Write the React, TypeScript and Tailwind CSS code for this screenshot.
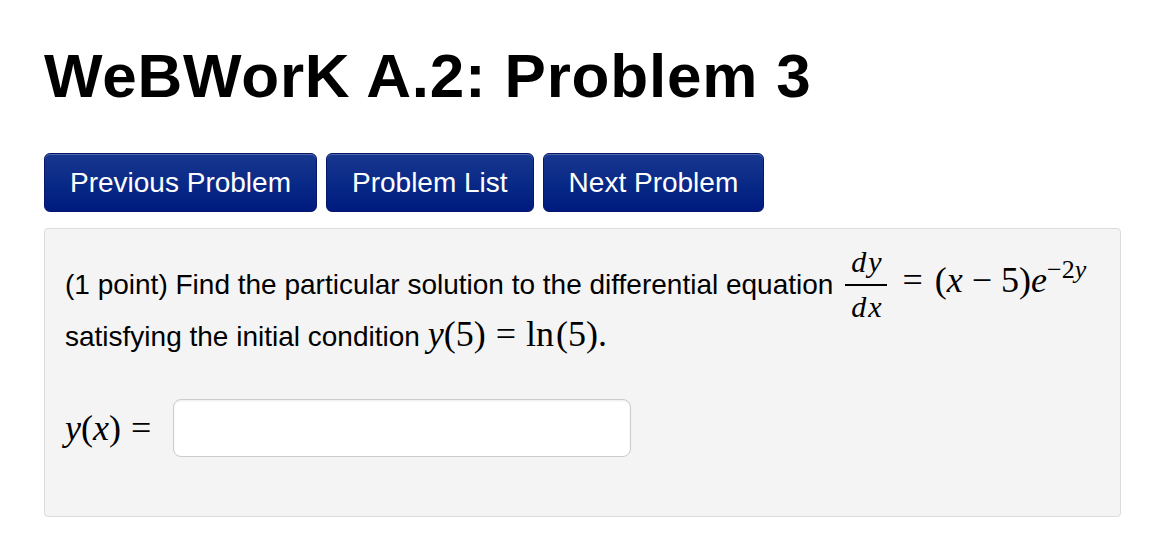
import React from "react";

const sans = { fontFamily: '"Liberation Sans", Arial, Helvetica, sans-serif' };

function Btn({ children }: { children: React.ReactNode }) {
  return (
    <button className="h-[59px] px-[25px] flex items-center rounded-[6px] border border-[#06166a] bg-gradient-to-b from-[#17378f] to-[#001a7f] text-white text-[28px] shadow-[inset_0_1px_0_rgba(255,255,255,0.25)] font-['Liberation_Sans',Arial,sans-serif]">
      {children}
    </button>
  );
}

export default function App() {
  return (
    <div className="pl-[44px] pt-[45px] bg-white min-h-[554px] text-black font-['Liberation_Sans',Arial,sans-serif]" style={sans}>
      <h1 className="text-[62px] leading-[62px] font-bold tracking-[0.8px]">WeBWorK A.2: Problem 3</h1>
      <div className="mt-[46px] flex gap-[9px]">
        <Btn>Previous Problem</Btn>
        <Btn>Problem List</Btn>
        <Btn>Next Problem</Btn>
      </div>
      <div className="mt-[16px] w-[1077px] bg-[#f4f4f4] border border-[#dcdcdc] rounded-[4px] pl-[20px] pt-[20px] pb-[59px] text-[28px]">
        <div className="leading-[30px]">
          <span className="align-middle">(1 point) Find the particular solution to the differential equation</span>
          <span className="inline-flex flex-col items-center align-middle ml-[12px] font-['Liberation_Serif',serif] italic text-[30px]">
            <span className="leading-[26px] pb-[9px] tracking-[2px] pl-[2px]">dy</span>
            <span className="h-[2px] w-[42px] bg-black"></span>
            <span className="leading-[26px] pt-[8px] tracking-[2px] pl-[2px]">dx</span>
          </span>
          <span className="font-['Liberation_Serif',serif] text-[36px] leading-[30px] align-baseline">
            <span className="ml-[15px] mr-[12px]">=</span>(<i>x</i>
            <span className="mx-[9px]">−</span>5)<i>e</i>
            <span className="relative top-[-14px] text-[26px]">−2<i>y</i></span>
          </span>
        </div>
        <div className="leading-[30px] mt-[-1px]">
          satisfying the initial condition{" "}
          <span className="font-['Liberation_Serif',serif] text-[36px] leading-[30px]">
            <i>y</i>(5)<span className="mx-[10px]">=</span>ln<span className="ml-[2px]">(5)</span>.
          </span>
        </div>
        <div className="mt-[47px] flex items-center">
          <span className="font-['Liberation_Serif',serif] text-[36px] leading-[36px] w-[108px]">
            <i>y</i>(<i>x</i>)<span className="ml-[10px]">=</span>
          </span>
          <input
            type="text"
            className="w-[458px] h-[58px] bg-white border-[1.5px] border-[#cccccc] rounded-[8px] shadow-[inset_0_1px_2px_rgba(0,0,0,0.08)] outline-none"
          />
        </div>
      </div>
    </div>
  );
}
